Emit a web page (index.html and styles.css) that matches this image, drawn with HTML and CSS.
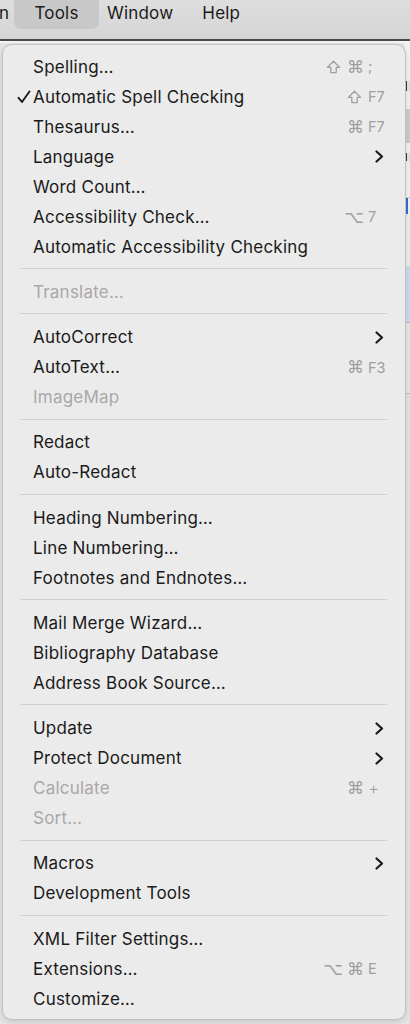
FILE: index.html
```html
<!DOCTYPE html>
<html lang="en">
<head>
<meta charset="utf-8">
<title>Tools menu</title>
<link rel="stylesheet" href="styles.css">
</head>
<body>
<div class="menubar">
  <span class="mb-item mb-cut">n</span>
  <span class="mb-item mb-active">Tools</span>
  <span class="mb-item mb-window">Window</span>
  <span class="mb-item mb-help">Help</span>
</div>
<div class="desk">
  <div class="app-strip">
    <div class="s s1"></div>
    <div class="s s2"></div>
    <div class="s s3"></div>
    <div class="s s4"></div>
    <div class="s s5"></div>
    <div class="s s6"></div>
    <div class="s s7"></div>
    <div class="s s8"></div>
    <div class="s s9"></div>
    <div class="s s10"></div>
    <div class="s s11"></div>
  </div>
</div>

<div class="menu">
  <div class="item"><span class="mark"></span><span class="label">Spelling…</span><span class="sc"><svg class="shift" width="15" height="14" viewBox="0 0 15 14"><path d="M7.5 1.2 L13.6 7.4 H10.2 V12.6 H4.8 V7.4 H1.4 Z" fill="none" stroke="#9e9e9e" stroke-width="1.3" stroke-linejoin="round"/></svg><span class="mods">⌘</span><span class="key">;</span></span></div>
  <div class="item"><span class="mark"><svg width="14" height="14" viewBox="0 0 14 14"><path d="M1.5 7.8 L5 12 L12.5 1.5" fill="none" stroke="#1a1a1a" stroke-width="1.9" stroke-linecap="round" stroke-linejoin="round"/></svg></span><span class="label">Automatic Spell Checking</span><span class="sc"><svg class="shift" width="15" height="14" viewBox="0 0 15 14"><path d="M7.5 1.2 L13.6 7.4 H10.2 V12.6 H4.8 V7.4 H1.4 Z" fill="none" stroke="#9e9e9e" stroke-width="1.3" stroke-linejoin="round"/></svg><span class="key">F7</span></span></div>
  <div class="item"><span class="mark"></span><span class="label">Thesaurus…</span><span class="sc"><span class="mods">⌘</span><span class="key">F7</span></span></div>
  <div class="item"><span class="mark"></span><span class="label">Language</span><svg class="chev" width="9" height="13" viewBox="0 0 9 13"><path d="M1.5 1.5 L7 6.5 L1.5 11.5" fill="none" stroke="#1a1a1a" stroke-width="2.2" stroke-linecap="round" stroke-linejoin="round"/></svg></div>
  <div class="item"><span class="mark"></span><span class="label">Word Count…</span></div>
  <div class="item"><span class="mark"></span><span class="label">Accessibility Check…</span><span class="sc"><span class="mods">⌥</span><span class="key">7</span></span></div>
  <div class="item"><span class="mark"></span><span class="label">Automatic Accessibility Checking</span></div>
  <div class="sep"></div>
  <div class="item disabled"><span class="mark"></span><span class="label">Translate…</span></div>
  <div class="sep"></div>
  <div class="item"><span class="mark"></span><span class="label">AutoCorrect</span><svg class="chev" width="9" height="13" viewBox="0 0 9 13"><path d="M1.5 1.5 L7 6.5 L1.5 11.5" fill="none" stroke="#1a1a1a" stroke-width="2.2" stroke-linecap="round" stroke-linejoin="round"/></svg></div>
  <div class="item"><span class="mark"></span><span class="label">AutoText…</span><span class="sc"><span class="mods">⌘</span><span class="key">F3</span></span></div>
  <div class="item disabled"><span class="mark"></span><span class="label">ImageMap</span></div>
  <div class="sep"></div>
  <div class="item"><span class="mark"></span><span class="label">Redact</span></div>
  <div class="item"><span class="mark"></span><span class="label">Auto-Redact</span></div>
  <div class="sep"></div>
  <div class="item"><span class="mark"></span><span class="label">Heading Numbering…</span></div>
  <div class="item"><span class="mark"></span><span class="label">Line Numbering…</span></div>
  <div class="item"><span class="mark"></span><span class="label">Footnotes and Endnotes…</span></div>
  <div class="sep"></div>
  <div class="item"><span class="mark"></span><span class="label">Mail Merge Wizard…</span></div>
  <div class="item"><span class="mark"></span><span class="label">Bibliography Database</span></div>
  <div class="item"><span class="mark"></span><span class="label">Address Book Source…</span></div>
  <div class="sep"></div>
  <div class="item"><span class="mark"></span><span class="label">Update</span><svg class="chev" width="9" height="13" viewBox="0 0 9 13"><path d="M1.5 1.5 L7 6.5 L1.5 11.5" fill="none" stroke="#1a1a1a" stroke-width="2.2" stroke-linecap="round" stroke-linejoin="round"/></svg></div>
  <div class="item"><span class="mark"></span><span class="label">Protect Document</span><svg class="chev" width="9" height="13" viewBox="0 0 9 13"><path d="M1.5 1.5 L7 6.5 L1.5 11.5" fill="none" stroke="#1a1a1a" stroke-width="2.2" stroke-linecap="round" stroke-linejoin="round"/></svg></div>
  <div class="item disabled"><span class="mark"></span><span class="label">Calculate</span><span class="sc"><span class="mods">⌘</span><span class="key plus">+</span></span></div>
  <div class="item disabled"><span class="mark"></span><span class="label">Sort…</span></div>
  <div class="sep"></div>
  <div class="item"><span class="mark"></span><span class="label">Macros</span><svg class="chev" width="9" height="13" viewBox="0 0 9 13"><path d="M1.5 1.5 L7 6.5 L1.5 11.5" fill="none" stroke="#1a1a1a" stroke-width="2.2" stroke-linecap="round" stroke-linejoin="round"/></svg></div>
  <div class="item"><span class="mark"></span><span class="label">Development Tools</span></div>
  <div class="sep"></div>
  <div class="item"><span class="mark"></span><span class="label">XML Filter Settings…</span></div>
  <div class="item"><span class="mark"></span><span class="label">Extensions…</span><span class="sc"><span class="mods">⌥⌘</span><span class="key">E</span></span></div>
  <div class="item"><span class="mark"></span><span class="label">Customize…</span></div>
</div>
</body>
</html>
```

FILE: styles.css
```css
html, body {
  margin: 0;
  padding: 0;
}
body {
  width: 410px;
  height: 1024px;
  overflow: hidden;
  position: relative;
  background: #e2e2e2;
  font-family: Inter, "Noto Sans", "Liberation Sans", sans-serif;
  color: #1a1a1a;
}

/* top menu bar */
.menubar {
  height: 41px;
  display: flex;
  align-items: flex-start;
  background: linear-gradient(#dedede, #d5d5d5);
  border-bottom: 2px solid #4a4a4a;
  box-sizing: border-box;
  font-size: 17px;
}
.mb-item {
  line-height: 27px;
  height: 29px;
  letter-spacing: 0.2px;
}
.mb-cut {
  width: 14px;
  margin-left: -1px;
  overflow: hidden;
}
.mb-active {
  width: 85px;
  margin-left: 1px;
  text-align: center;
  background: #c8c8c8;
  border-radius: 0 0 7px 7px;
}
.mb-window {
  margin-left: 8px;
}
.mb-help {
  margin-left: 29px;
}

/* the document window behind the menu */
.desk {
  height: 983px;
  display: flex;
  justify-content: flex-end;
  background: #e4e4e4;
  border-top: 2px solid #f4f4f4;
}
.app-strip {
  width: 5px;
  display: flex;
  flex-direction: column;
}
.s1 { height: 38px; background: #f2f2f2; }
.s2 { height: 10px; background: #3a3a3a; width: 2px; }
.s3 { height: 18px; background: #f2f2f2; border-bottom: 1px solid #cfcfcf; }
.s4 { height: 33px; background: #cdcdcd; }
.s5 { height: 10px; background: #f2f2f2; }
.s6 { height: 8px; background: #3a3a3a; width: 2px; }
.s7 { height: 36px; background: #f2f2f2; border-bottom: 1px solid #cfcfcf; }
.s8 { height: 16px; background: #f2f2f2; border-left: 3px solid #2f72c9; box-sizing: border-box; }
.s9 { height: 52px; background: #ededed; }
.s10 { height: 56px; background: #c9dcef; border-bottom: 1px solid #b8b8b8; }
.s11 { height: 70px; background: #e8e8e8; border-bottom: 1px solid #c4c4c4; }

/* the dropdown menu (overlay) */
.menu {
  position: absolute;
  top: 44px;
  left: 2px;
  width: 404px;
  box-sizing: border-box;
  padding: 6px 0;
  background: #ebebeb;
  border: 1px solid #c2c2c2;
  border-radius: 10px;
  box-shadow: 0 2px 6px rgba(0, 0, 0, 0.12);
  font-size: 17px;
}
.item {
  height: 30px;
  display: flex;
  align-items: center;
  padding: 1px 21px 0 12px;
  box-sizing: border-box;
}
.mark {
  width: 18px;
  flex: none;
  display: flex;
  align-items: center;
}
.mark svg {
  margin-left: 2px;
}
.label {
  flex: 1;
  white-space: nowrap;
  letter-spacing: 0.22px;
}
.disabled .label {
  color: #a8a8a8;
}
.sc {
  display: flex;
  align-items: center;
  color: #9e9e9e;
}
.shift {
  display: block;
  margin-right: 6px;
}
.mods {
  font-family: "DejaVu Sans", sans-serif;
  font-size: 17px;
  letter-spacing: 4px;
}
.key {
  width: 16px;
  font-size: 14.5px;
  text-align: left;
}
.plus {
  font-size: 17px;
  font-weight: 300;
}
.chev {
  flex: none;
  display: block;
}
.sep {
  height: 15.25px;
  display: flex;
  align-items: center;
  margin: 0 18px 0 17px;
}
.sep::before {
  content: "";
  flex: 1;
  height: 1px;
  background: #d1d1d1;
}
```
